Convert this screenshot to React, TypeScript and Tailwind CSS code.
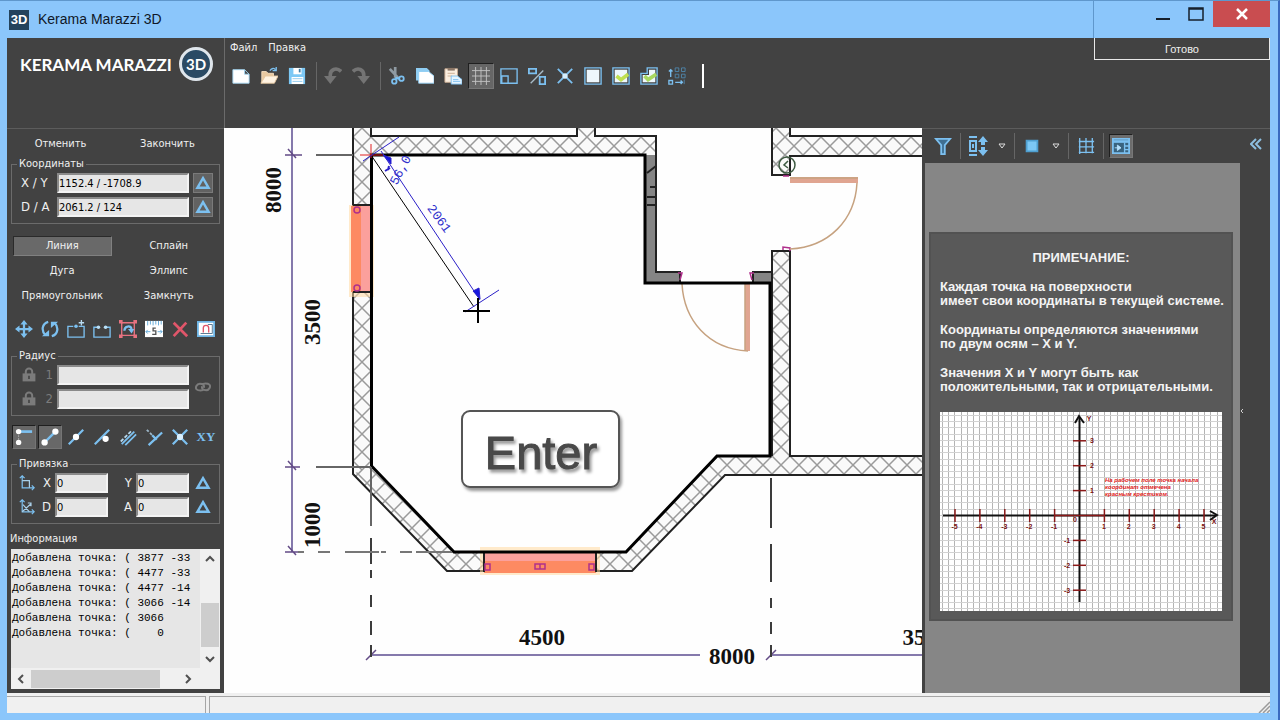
import React, { useState } from 'react';

type IconProps = { children: React.ReactNode; size?: string };

function Icon({ children, size = 'size-[18px]' }: IconProps) {
  return (
    <svg viewBox="0 0 20 20" className={`${size} shrink-0`} fill="none" aria-hidden="true">
      {children}
    </svg>
  );
}

const BLUE = '#7cc0f0';

const mainTools = [
  {
    name: 'Новый',
    icon: <path d="M1 3h13l5 5v10H1z M14 3v5h5" fill="#fff" stroke="#a5d8f5" />,
  },
  {
    name: 'Открыть',
    icon: (
      <>
        <path d="M2 18V5h5l2 2h6v3" fill="#e9c9a0" stroke="#f3dcbf" />
        <path d="M1 18l5-8h14l-4 8z" fill="#fff3e2" stroke="#e9c9a0" />
        <path d="M11 4c2-3 5-3 6-1M18 0v4h-4" stroke={BLUE} strokeWidth="1.5" />
      </>
    ),
  },
  {
    name: 'Сохранить',
    icon: (
      <>
        <path d="M1 1h18v18H1z" fill="#7cc8f5" />
        <path d="M6 1h9v7H6zM4 11h13v8H4z" fill="#fff" />
        <path d="M12 2h2v4h-2z" fill="#3d7ea8" />
        <path d="M5 13h11M5 16h11" stroke="#8bc8ee" />
      </>
    ),
  },
  null,
  {
    name: 'Отменить действие',
    icon: (
      <>
        <path d="M19 5C14 0 6 2 7 11" stroke="#747474" strokeWidth="4" />
        <path d="M0 10h14l-7 9z" fill="#747474" />
      </>
    ),
  },
  {
    name: 'Повторить действие',
    icon: (
      <>
        <path d="M1 5c5-5 13-3 12 6" stroke="#747474" strokeWidth="4" />
        <path d="M6 10h14l-7 9z" fill="#747474" />
      </>
    ),
  },
  null,
  {
    name: 'Вырезать',
    icon: (
      <>
        <path d="M2 2l10 11M8 0v12" stroke="#8f9aa2" strokeWidth="3" />
        <circle cx="7" cy="16" r="2.5" stroke={BLUE} strokeWidth="2" />
        <circle cx="15" cy="13" r="2.5" stroke={BLUE} strokeWidth="2" />
        <path d="M8 12l5 1" stroke={BLUE} strokeWidth="2.5" />
      </>
    ),
  },
  {
    name: 'Копировать',
    icon: (
      <>
        <path d="M0 1h12l3 3v11H0z" fill="#8fcdf3" />
        <path d="M3 5h11l6 5v8H3z" fill="#fff" stroke="#8fcdf3" />
      </>
    ),
  },
  {
    name: 'Вставить',
    icon: (
      <>
        <path d="M1 2h14v15H1z" fill="#fbeee0" stroke="#c9ab92" />
        <path d="M4 1h8v3H4z" fill="#8c7767" />
        <path d="M4 7h8M4 10h5" stroke="#c9ab92" />
        <path d="M8 10h7l5 4v5H8z" fill="#e6f5ff" stroke="#7cc0f0" />
        <path d="M10 14h6M10 16h8" stroke="#7cc0f0" />
      </>
    ),
  },
  {
    name: 'Сетка',
    icon: <path d="M0 4h20M0 10h20M0 16h20M4 0v20M10 0v20M16 0v20" stroke="#c4c4c4" />,
  },
  {
    name: 'Масштаб',
    icon: <path d="M1 2h18v16H1zM2 10h7v8H2z" stroke={BLUE} strokeWidth="1.5" />,
  },
  {
    name: 'Пропорции',
    icon: (
      <>
        <path d="M1 2h8v5H1zM13 11h6v8h-6z" stroke={BLUE} strokeWidth="2" />
        <path d="M17 4L3 18" stroke="#a9bdca" strokeWidth="1.5" />
      </>
    ),
  },
  {
    name: 'Пересечение',
    icon: (
      <>
        <path d="M2 2l16 16M18 2L2 18" stroke={BLUE} strokeWidth="2" />
        <circle cx="10" cy="10" r="3" fill="#d4efff" />
      </>
    ),
  },
  {
    name: 'Поверхность',
    icon: (
      <>
        <path d="M1 1h18v18H1z" stroke={BLUE} strokeWidth="1.5" />
        <path d="M3 3h14v14H3z" fill="#eef7fc" />
      </>
    ),
  },
  {
    name: 'Принять поверхность',
    icon: (
      <>
        <path d="M1 1h18v18H1z" stroke={BLUE} strokeWidth="1.5" />
        <path d="M3 3h14v14H3z" fill="#eef7fc" />
        <path d="M5 10l5 4 8-6" stroke="#bfe052" strokeWidth="4" />
      </>
    ),
  },
  {
    name: 'Принять контур',
    icon: (
      <>
        <path d="M1 7h7V1h11v18H1z" stroke={BLUE} strokeWidth="1.5" />
        <path d="M3 9h7V3h7v14H3z" fill="#eef7fc" />
        <path d="M5 10l4 4 9-6" stroke="#a8d860" strokeWidth="4" />
      </>
    ),
  },
  {
    name: 'Массив',
    icon: (
      <>
        <path d="M1 15h4v4H1zM3 11V3M1 5l2-2 2 2M8 17h8M14 15l2 2-2 2" stroke={BLUE} strokeWidth="1.5" />
        <path d="M8 1h4v4H8zM15 1h4v4h-4zM8 8h4v4H8zM15 8h4v4h-4zM18 14v5" stroke="#4f87ad" />
      </>
    ),
  },
];

const editTools = [
  {
    name: 'Переместить',
    icon: (
      <>
        <path d="M10 3v14M3 10h14" stroke={BLUE} strokeWidth="2.5" />
        <path d="M10 0l4 5H6zM10 20l-4-5h8zM0 10l5-4v8zM20 10l-5 4V6z" fill={BLUE} />
      </>
    ),
  },
  {
    name: 'Повернуть',
    icon: (
      <>
        <path d="M8 2C1 4 0 12 5 17M12 18c7-2 8-10 3-15" stroke={BLUE} strokeWidth="2.5" />
        <path d="M1 18h8v-7zM19 2h-8v7z" fill={BLUE} />
      </>
    ),
  },
  {
    name: 'Добавить точку',
    icon: (
      <>
        <path d="M7 7H1v12h18V7h-6" stroke={BLUE} strokeWidth="1.5" />
        <path d="M16 0v6M13 3h6" stroke="#b9dcf2" strokeWidth="1.5" />
        <circle cx="10" cy="7" r="2" fill={BLUE} />
      </>
    ),
  },
  {
    name: 'Удалить точку',
    icon: (
      <>
        <path d="M6 8H1v11h18V8h-5" stroke={BLUE} strokeWidth="1.5" />
        <circle cx="6" cy="8" r="2" fill="#b9e0f8" />
        <circle cx="14" cy="8" r="2" fill="#b9e0f8" />
      </>
    ),
  },
  {
    name: 'Трансформация',
    icon: (
      <>
        <path d="M3 3h14v14H3z" stroke="#e77280" strokeWidth="1.5" />
        <path d="M0 0h4v4H0zM16 0h4v4h-4zM0 16h4v4H0zM16 16h4v4h-4z" fill="#e77280" />
        <path d="M6 12c0-6 7-6 8-2" stroke={BLUE} strokeWidth="2.5" />
        <path d="M10 10h7l-3 5z" fill={BLUE} />
      </>
    ),
  },
  {
    name: 'Размер',
    icon: (
      <>
        <path d="M0 1h20v18H0z" fill="#fff" />
        <path d="M3 1v5M6 1v4M9 1v5M12 1v4M15 1v5M18 1v4M1 13h5M14 13h5M3 11l-2 2 2 2M17 11l2 2-2 2" stroke="#5aa6d8" />
        <path d="M12 9H9v3h3v4H8" stroke="#555" strokeWidth="1.5" />
      </>
    ),
  },
  {
    name: 'Удалить',
    icon: <path d="M3 3l15 15M17 3L3 18" stroke="#e0566a" strokeWidth="3" />,
  },
  {
    name: 'Контур проёма',
    icon: (
      <>
        <path d="M1 2h18v16H1z" fill="#fff" stroke="#6fb6e6" strokeWidth="2" />
        <path d="M12 5h5v10H4" stroke="#4b6f8a" />
        <path d="M7 14V9c0-4 6-4 6 0v5" stroke="#e0566a" strokeWidth="1.5" />
      </>
    ),
  },
];

const snapTools = [
  {
    name: 'Привязка к углу',
    icon: (
      <>
        <path d="M4 4h15" stroke={BLUE} strokeWidth="3" />
        <path d="M4 8v6" stroke="#aaa" strokeDasharray="2 1" />
        <circle cx="4" cy="4" r="3" fill="#fff" />
        <circle cx="4" cy="16" r="3" fill="#fff" />
      </>
    ),
  },
  {
    name: 'Привязка к концу',
    icon: (
      <>
        <path d="M4 16L16 4" stroke={BLUE} strokeWidth="2.5" />
        <circle cx="16" cy="4" r="3.5" fill="#fff" />
        <circle cx="4" cy="16" r="3.5" fill="#fff" />
      </>
    ),
  },
  {
    name: 'Привязка к середине',
    icon: (
      <>
        <path d="M2 18L18 2" stroke={BLUE} strokeWidth="2.5" />
        <circle cx="10" cy="10" r="3.5" fill="#fff" />
      </>
    ),
  },
  {
    name: 'Ближайшая точка',
    icon: (
      <>
        <path d="M2 18L18 2" stroke={BLUE} strokeWidth="2.5" />
        <circle cx="14" cy="12" r="3.5" fill="#fff" />
      </>
    ),
  },
  {
    name: 'Параллель',
    icon: (
      <>
        <path d="M2 15L14 3" stroke="#b6d7ec" strokeWidth="2" strokeDasharray="4 2" />
        <path d="M3 18L17 4M7 19L19 7" stroke={BLUE} strokeWidth="2" />
      </>
    ),
  },
  {
    name: 'Перпендикуляр',
    icon: (
      <>
        <path d="M2 2l8 8" stroke="#9cb7c9" strokeWidth="2" strokeDasharray="3 2" />
        <path d="M4 19L19 5M8 8l5 5" stroke={BLUE} strokeWidth="2.5" />
      </>
    ),
  },
  {
    name: 'Привязка к пересечению',
    icon: (
      <>
        <path d="M2 2l16 16M18 2L2 18" stroke={BLUE} strokeWidth="2.5" />
        <circle cx="10" cy="10" r="3.5" fill="#d9f0ff" />
      </>
    ),
  },
];

const log = [
  'Добавлена точка: ( 3877 -33',
  'Добавлена точка: ( 4477 -33',
  'Добавлена точка: ( 4477 -14',
  'Добавлена точка: ( 3066 -14',
  'Добавлена точка: ( 3066',
  'Добавлена точка: (    0',
];

const fieldClass =
  'h-5 w-full min-w-0 border-2 border-t-[#8a8a8a] border-l-[#8a8a8a] border-r-[#f4f4f4] border-b-[#f4f4f4] bg-[#e6e6e6] text-[11px] leading-4 text-black outline-none';

function Triangle() {
  return (
    <Icon size="size-4">
      <path d="M10 4l7 12H3z" stroke={BLUE} strokeWidth="3" />
    </Icon>
  );
}

function Lock() {
  return (
    <Icon size="size-4">
      <path d="M6 9V6a4 4 0 0 1 8 0v3" stroke="#7b7b7b" strokeWidth="2.5" />
      <path d="M2 8h16v10H2z" fill="#7b7b7b" />
      <path d="M9 11h2v4H9z" fill="#424242" />
    </Icon>
  );
}

function AxisIcon({ angled }: { angled?: boolean }) {
  return (
    <Icon size="size-4">
      <path d="M4 1v15h15M1 4l3-3 3 3M16 13l3 3-3 3" stroke={BLUE} strokeWidth="1.5" />
      {angled ? (
        <path d="M4 16L15 6M5 7l8 9M11 5h4v4" stroke="#a9cfe8" strokeWidth="1.5" />
      ) : (
        <path d="M4 7h9v9" stroke="#a9cfe8" strokeWidth="1.5" />
      )}
    </Icon>
  );
}

function Group({ title, children }: { title: string; children: React.ReactNode }) {
  return (
    <fieldset className="mx-1 min-w-0 border border-[#6b6b6b] px-[5px] pt-px pb-1.5">
      <legend className="px-0.5 leading-4">{title}</legend>
      {children}
    </fieldset>
  );
}

function LeftPanel() {
  const modes = ['Линия', 'Сплайн', 'Дуга', 'Эллипс', 'Прямоугольник', 'Замкнуть'];
  const [mode, setMode] = useState('Линия');

  return (
    <aside className="flex w-[217px] shrink-0 flex-col border-t border-[#5c5c5c] pt-[5px] pb-1">
      <div className="grid h-5 grid-cols-2 pr-[3px]">
        <button type="button">Отменить</button>
        <button type="button">Закончить</button>
      </div>

      <div className="mt-0.5">
        <Group title="Координаты">
          <div className="grid grid-cols-[32px_1fr_20px] items-center gap-x-1 gap-y-1 pr-px pl-1">
            <label htmlFor="xy" className="text-[13px] whitespace-nowrap">X / Y</label>
            <input id="xy" className={fieldClass} defaultValue="1152.4 / -1708.9" />
            <button type="button" aria-label="Относительно X / Y" className="flex size-5 items-center justify-center border border-[#7a7a7a] bg-[#626262]"><Triangle /></button>
            <label htmlFor="da" className="text-[13px] whitespace-nowrap">D / A</label>
            <input id="da" className={fieldClass} defaultValue="2061.2 / 124" />
            <button type="button" aria-label="Относительно D / A" className="flex size-5 items-center justify-center border border-[#7a7a7a] bg-[#626262]"><Triangle /></button>
          </div>
        </Group>
      </div>

      <div className="mt-3 grid grid-cols-2 gap-x-2 gap-y-[5px] px-1.5">
        {modes.map((m) => (
          <button
            key={m}
            type="button"
            onClick={() => setMode(m)}
            className={
              m === mode
                ? 'h-5 border border-t-[#2a2a2a] border-l-[#2a2a2a] border-r-[#808080] border-b-[#808080] bg-[#696969]'
                : 'h-5'
            }
          >
            {m}
          </button>
        ))}
      </div>

      <div className="mt-[11px] flex pl-1">
        {editTools.map((t) => (
          <button key={t.name} type="button" aria-label={t.name} className="flex h-6 w-[26px] items-center justify-center">
            <Icon>{t.icon}</Icon>
          </button>
        ))}
      </div>

      <div className="mt-[7px]">
        <Group title="Радиус">
          <div className="grid grid-cols-[16px_12px_1fr_20px] items-center gap-x-1 gap-y-1 pr-px pl-1 text-[13px] text-[#7b7b7b]">
            <Lock />
            <label htmlFor="r1" className="text-right">1</label>
            <input id="r1" className={fieldClass} />
            <button type="button" aria-label="Связать радиусы" className="row-span-2 flex items-center justify-center">
              <svg viewBox="0 0 20 12" className="h-3 w-4" fill="none" stroke="#7b7b7b" strokeWidth="2.5">
                <path d="M11 9c-1 2-7 2-9 0s0-7 4-7 6 2 5 5M9 3c1-2 7-2 9 0s0 7-4 7-6-2-5-5" />
              </svg>
            </button>
            <Lock />
            <label htmlFor="r2" className="text-right">2</label>
            <input id="r2" className={fieldClass} />
          </div>
        </Group>
      </div>

      <div className="mt-[9px] flex pl-[5px]">
        {snapTools.map((t, i) => (
          <button
            key={t.name}
            type="button"
            aria-label={t.name}
            className={
              i < 2
                ? 'mr-0.5 flex size-6 items-center justify-center border border-t-[#1f1f1f] border-l-[#1f1f1f] border-r-[#757575] border-b-[#757575] bg-[#686868]'
                : 'mr-0.5 flex size-6 items-center justify-center'
            }
          >
            <Icon>{t.icon}</Icon>
          </button>
        ))}
        <button type="button" className="size-6 font-['Liberation_Serif',serif] text-[13px] font-bold text-[#7cc0f0]">XY</button>
      </div>

      <div className="mt-[7px]">
        <Group title="Привязка">
          <div className="grid grid-cols-[16px_12px_1fr_20px_1fr_20px] items-center gap-x-1 gap-y-1 pr-px pl-0.5 text-[13px]">
            <AxisIcon />
            <label htmlFor="sx" className="text-right">X</label>
            <input id="sx" className={fieldClass} defaultValue="0" />
            <label htmlFor="sy" className="text-right">Y</label>
            <input id="sy" className={fieldClass} defaultValue="0" />
            <button type="button" aria-label="Относительная привязка X, Y" className="flex justify-center"><Triangle /></button>
            <AxisIcon angled />
            <label htmlFor="sd" className="text-right">D</label>
            <input id="sd" className={fieldClass} defaultValue="0" />
            <label htmlFor="sa" className="text-right">A</label>
            <input id="sa" className={fieldClass} defaultValue="0" />
            <button type="button" aria-label="Относительная привязка D, A" className="flex justify-center"><Triangle /></button>
          </div>
        </Group>
      </div>

      <h2 className="mt-[7px] px-[3px] leading-4">Информация</h2>
      <div className="mx-1 mt-0.5 flex min-h-[120px] flex-1 flex-col bg-[#f0f0f0]">
        <div className="flex flex-1">
          <pre className="h-[119px] min-w-0 flex-1 overflow-hidden bg-[#e6e6e6] pt-0.5 pl-px font-['Liberation_Mono',monospace] text-[11px] leading-[15px] text-black">
            {log.join('\n')}
          </pre>
          <div className="flex w-5 flex-col items-center justify-between">
            <ScrollArrow d="M2 7l4-4 4 4" />
            <div className="mt-8 h-11 w-[18px] bg-[#cdcdcd]" />
            <ScrollArrow d="M2 3l4 4 4-4" />
          </div>
        </div>
        <div className="flex h-5 items-center">
          <ScrollArrow d="M8 1L4 5l4 4" />
          <div className="h-[18px] w-[129px] bg-[#cdcdcd]" />
          <div className="flex w-[38px] justify-end"><ScrollArrow d="M4 1l4 4-4 4" /></div>
        </div>
      </div>
    </aside>
  );
}

function ScrollArrow({ d }: { d: string }) {
  return (
    <button type="button" aria-label="Прокрутка" className="flex size-5 shrink-0 items-center justify-center">
      <svg viewBox="0 0 12 10" className="h-2.5 w-3" fill="none" stroke="#505050" strokeWidth="2">
        <path d={d} />
      </svg>
    </button>
  );
}

function FloorPlan() {
  return (
    <svg viewBox="224 128 698 565" preserveAspectRatio="xMidYMid slice" className="block h-full w-full bg-[#fefefe]" fill="none">
      <defs>
        <pattern id="hatch" x="353" y="137" width="18" height="18" patternUnits="userSpaceOnUse">
          <rect width="18" height="18" fill="#fafafa" />
          <path d="M0 0l18 18M18 0L0 18" stroke="#9a9a9a" strokeWidth="1.5" />
        </pattern>
        <pattern id="hatchRight" x="772" y="456" width="18" height="18" patternUnits="userSpaceOnUse">
          <rect width="18" height="18" fill="#fafafa" />
          <path d="M0 0l18 18M18 0L0 18" stroke="#9a9a9a" strokeWidth="1.5" />
        </pattern>
        <filter id="keyShadow" x="-10%" y="-10%" width="130%" height="140%">
          <feDropShadow dx="2" dy="3" stdDeviation="1.5" floodColor="#000" floodOpacity="0.4" />
        </filter>
      </defs>

      {/* walls */}
      <path d="M353 120H371V474H353z" fill="url(#hatch)" />
      <path d="M371 136H577V120H595V136H656V155H371z" fill="url(#hatch)" />
      <path d="M772 120H790V136H930V156H790V175H772z" fill="url(#hatch)" />
      <path d="M772 251H790V456H930V475H725L717 456H772z" fill="url(#hatchRight)" />
      <path d="M353 474L371 466L454 552H484V571H447zM596 552H626L717 456L725 475L632 571H596z" fill="url(#hatchRight)" />
      <path d="M645 155H656V272H680V283H645zM753 272H771V283H753z" fill="#858585" />

      <g stroke="#222" strokeWidth="2">
        <path d="M353 120V474L447 571H632L725 475H930" />
        <path d="M371 120V136H577V120M595 120V136H656V272H680V283M753 283V272H771" />
        <path d="M772 120V175H790V156H930M790 120V136H930" />
        <path d="M772 456V251H790V456H930" />
        <path d="M656 166l-9 7M647 197h9M647 205h9M656 187h-6" />
      </g>

      {/* windows */}
      <path d="M349 205h25v92h-25zM480 547h120v28H480z" fill="#ffd9a0" fillOpacity="0.55" />
      <path d="M351 206h20v86h-20zM484 552h112v21H484z" fill="#fba09c" />
      <path d="M351 206h10v86h-10zM484 561h112v12H484z" fill="#fd8a62" />
      <path d="M353 205h18M353 292h18M484 552v20M596 552v20" stroke="#222" strokeWidth="2" />
      <g stroke="#b0308c" strokeWidth="1.5">
        <circle cx="357" cy="210" r="3" />
        <circle cx="357" cy="288" r="3" />
        <path d="M485 564h5v6h-5zM535 564h5v5h-5zM540 564h5v5h-5zM589 564h5v6h-5zM678 273h4l-2 7M754 273h-4l2 7M783 250v-3l7 1v3M783 176h6" />
      </g>

      {/* doors */}
      <path d="M790 177h68v6h-68zM745 283h5v68h-5z" fill="#e0a591" />
      <path d="M790 178h68M745 284v67M857 183C855 220 829 247 790 249M682 284C684 320 708 349 748 351" stroke="#c6a280" strokeWidth="1.5" />
      <circle cx="787" cy="165" r="8" stroke="#3e5a42" strokeWidth="1.5" />
      <path d="M788 161l-4 4 4 3" stroke="#3e5a42" strokeWidth="1.5" />

      {/* room outline */}
      <path d="M371.500 155V466L454 552H626L717 456H770V283H645V155z" stroke="#000" strokeWidth="3" />

      {/* dimension lines */}
      <g stroke="#8579ac" strokeWidth="2">
        <path d="M292 120V552M371 655H700M771 655H930" />
        <path d="M285 155h17M285 467h15M285 552h13M288 149l8 9M288 461l8 9M288 546l8 9M366 660l10-10M766 660l10-10" stroke="#634b86" strokeWidth="1.5" />
      </g>
      <g stroke="#3c3c3c" strokeWidth="2">
        <path d="M316 155h37M316 467h55M371 467v59" stroke="#666" />
        <path d="M371 538v26M371 570v8M371 595v12M371 621v14M371 645v12" />
        <path d="M771 478v50M771 544v38M771 598v10M771 622v12M771 645v12" />
        <path d="M298 552h6M318 552h12M345 552h34M381 552h5M400 552h12M416 552h36" stroke="#777" />
      </g>

      <g fill="#111" className="font-['Liberation_Serif',serif] text-[23px] font-bold" textAnchor="middle">
        <text transform="translate(281 190) rotate(-90)">8000</text>
        <text transform="translate(320 322) rotate(-90)">3500</text>
        <text transform="translate(320 525) rotate(-90)">1000</text>
        <text x="542" y="645">4500</text>
        <text x="732" y="664">8000</text>
        <text x="914" y="645">35</text>
      </g>

      {/* segment being drawn */}
      <path d="M371 155L474 307" stroke="#000" />
      <path d="M360 155h24M371 144v14" stroke="#e02020" />
      <g stroke="#2b20c8">
        <path d="M381 151L480 300M363 161L399 137M465 312L499 290" />
        <path d="M383 155l8 3v6zM480 299l-7-8 6-3z" fill="#1616e0" />
        <path d="M385 171l5-3M389 166l-1 4" strokeWidth="2" />
      </g>
      <g fill="#3030cc" className="font-['Liberation_Mono',monospace] text-[13px]" textAnchor="middle">
        <text transform="translate(436 221) rotate(54)">2061</text>
        <text transform="translate(404 172) rotate(-62)">56,0</text>
      </g>
      <path d="M463 311h27M478 298v25" stroke="#000" strokeWidth="2" />

      {/* pressed key */}
      <rect x="462" y="411" width="157" height="76" rx="8" fill="#fff" stroke="#555" strokeWidth="2" filter="url(#keyShadow)" />
      <text x="541" y="469" textAnchor="middle" fill="#484848" stroke="#484848" filter="url(#keyShadow)" className="font-['Liberation_Sans',sans-serif] text-[47px]">Enter</text>
    </svg>
  );
}

function AxesChart() {
  const xs = [-5, -4, -3, -2, -1, 1, 2, 3, 4, 5];
  const ys = [-3, -2, -1, 1, 2, 3];
  const cols = Array.from({ length: 45 }, (_, i) => Math.round(i * 6.24 + 2));
  const rows = Array.from({ length: 32 }, (_, i) => Math.round(i * 6.24 + 3));
  return (
    <svg viewBox="0 0 282 199" className="block w-full bg-white" fill="none">
      <g shapeRendering="crispEdges">
        {cols.map((x) => <path key={x} d={`M${x} 0V199`} stroke="#b4b4b4" />)}
        {rows.map((y) => <path key={y} d={`M0 ${y}H282`} stroke="#d2d2d2" />)}
      </g>
      <path d="M3 103.500H276M139.500 5V190" stroke="#111" strokeWidth="2" />
      <path d="M135 11l4-7 5 7M270 99l7 4-7 5" stroke="#111" strokeWidth="2" />
      <path d="M115 103.500H164" stroke="#8a1818" strokeWidth="1.5" />
      <g stroke="#8a1818" strokeWidth="1.5">
        {xs.map((n) => <path key={n} d={`M${139.5 + n * 24.9} 97v13`} />)}
        {ys.map((n) => <path key={n} d={`M133 ${103.5 - n * 24.9}h13`} />)}
      </g>
      <g fill="#7a1010" className="font-['Liberation_Sans',sans-serif] text-[7px] font-bold" textAnchor="middle">
        {xs.map((n) => <text key={n} x={139 + n * 24.9} y="117">{n}</text>)}
        {ys.map((n) => <text key={n} x={n > 0 ? 152 : 127} y={106 - n * 24.9}>{n}</text>)}
        <text x="149" y="9">Y</text>
        <text x="274" y="112">X</text>
        <text x="135" y="110">0</text>
      </g>
      <g fill="#e02020" className="font-['Liberation_Sans',sans-serif] text-[6px] font-bold italic">
        <text x="165" y="70">На рабочем поле точка начала</text>
        <text x="165" y="77">координат отмечена</text>
        <text x="165" y="84">красным крестиком.</text>
      </g>
    </svg>
  );
}

function RightPanel() {
  const sep = 'h-[26px] w-px bg-[#666]';
  const tool = 'flex h-6 items-center justify-center';
  return (
    <aside className="flex w-[348px] shrink-0 border-t border-[#5c5c5c] pl-[3px]">
      <div className="flex w-[315px] flex-col">
        <div className="flex h-[34px] items-center">
          <button type="button" aria-label="Фильтр" className={`${tool} w-[35px]`}>
            <Icon>
              <path d="M2 2h16l-6 7v10H8V9z" fill="#3f6f92" stroke={BLUE} strokeWidth="2" />
            </Icon>
          </button>
          <span className={sep} />
          <button type="button" aria-label="Сортировка" className={`${tool} w-[33px]`}>
            <Icon size="size-5">
              <path d="M1 1h8M1 19h8M2 5h6v10H2z" stroke={BLUE} strokeWidth="2" />
              <path d="M4 8h2v4H4z" fill={BLUE} />
              <path d="M15 0l5 6h-3v3h-4V6h-3zM15 20l-5-6h3v-3h4v3h3z" fill={BLUE} />
            </Icon>
          </button>
          <button type="button" aria-label="Варианты сортировки" className={`${tool} w-5 pr-1`}>
            <svg viewBox="0 0 8 6" className="h-1.5 w-2" fill="none" stroke="#ddd"><path d="M1 1h6L4 5z" /></svg>
          </button>
          <span className={sep} />
          <button type="button" aria-label="Вид" className={`${tool} w-[33px]`}>
            <Icon>
              <path d="M4 4h12v12H4z" fill="#7cc8f5" stroke="#4f9fd0" strokeWidth="2" />
            </Icon>
          </button>
          <button type="button" aria-label="Варианты вида" className={`${tool} w-5 pr-1`}>
            <svg viewBox="0 0 8 6" className="h-1.5 w-2" fill="none" stroke="#ddd"><path d="M1 1h6L4 5z" /></svg>
          </button>
          <span className={sep} />
          <button type="button" aria-label="Сетка каталога" className={`${tool} w-[34px]`}>
            <Icon>
              <path d="M3 1v18M10 1v17M17 1v17M2 5h17M2 11h17M2 17h17" stroke={BLUE} strokeWidth="1.5" />
            </Icon>
          </button>
          <span className={sep} />
          <button type="button" aria-label="Панель" className="ml-[5px] flex size-6 items-center justify-center border border-t-[#1f1f1f] border-l-[#1f1f1f] border-r-[#777] border-b-[#777] bg-[#6c6c6c]">
            <Icon>
              <path d="M1 2h18v16H1z" fill="#39637f" stroke={BLUE} strokeWidth="2" />
              <path d="M1 5h18" stroke={BLUE} strokeWidth="3" />
              <path d="M14 6v12M14 10h5M14 14h5" stroke={BLUE} strokeWidth="1.5" />
              <path d="M3 12h5M6 9l4 3-4 3z" fill="#b5e2ff" stroke="#b5e2ff" />
            </Icon>
          </button>
        </div>
        <div className="flex-1 bg-[#868686] pr-[7px] pl-1">
          <article className="mt-[69px] border-2 border-[#525252] bg-[#595959] px-[9px] pt-[17px] pb-2 font-['Liberation_Sans',sans-serif] text-[13px] leading-[14px] font-bold text-[#f4f4f4]">
            <h2 className="text-center">ПРИМЕЧАНИЕ:</h2>
            <p className="mt-[15px] whitespace-nowrap">Каждая точка на поверхности<br />имеет свои координаты в текущей системе.</p>
            <p className="mt-[15px] whitespace-nowrap">Координаты определяются значениями<br />по двум осям – X и Y.</p>
            <p className="mt-[15px] mb-[18px] whitespace-nowrap">Значения X и Y могут быть как<br />положительными, так и отрицательными.</p>
            <AxesChart />
          </article>
        </div>
      </div>
      <div className="flex flex-1 flex-col items-center">
        <button type="button" aria-label="Развернуть панель" className="mt-[3px] flex size-6 items-center justify-center pl-0.5">
          <svg viewBox="0 0 12 12" className="size-3" fill="none" stroke="#8dbfe0" strokeWidth="2">
            <path d="M6 1L1 6l5 5M11 1L6 6l5 5" />
          </svg>
        </button>
        <button type="button" aria-label="Свернуть панель" className="mt-[252px] self-start">
          <svg viewBox="0 0 3 6" className="h-1.5 w-[3px]" fill="none" stroke="#d0d0d0"><path d="M3 1L1 3l2 2" /></svg>
        </button>
      </div>
    </aside>
  );
}

export default function App() {
  return (
    <div className="flex min-h-screen w-full flex-col border-t border-r-2 border-t-[#5f97cc] border-r-[#3a6bc0] bg-[#8bc6fb] pr-2 pb-[7px] pl-[7px] font-['DejaVu_Sans_Condensed','Noto_Sans',sans-serif] text-[11px] text-[#f0f0f0]">
      <header className="flex h-[37px] shrink-0 text-[#101828]">
        <div className="flex flex-1 items-center pl-0.5">
          <span className="flex size-5 items-center justify-center bg-[#24435c] font-['Liberation_Sans',sans-serif] text-[13px] font-bold text-white">3D</span>
          <h1 className="ml-[9px] font-['Liberation_Sans',sans-serif] text-[14px]">Kerama Marazzi 3D</h1>
        </div>
        <div className="flex w-[177px] items-start justify-end border-l border-[#5f97cc]">
          <button type="button" aria-label="Свернуть" className="flex h-[25px] w-8 items-center justify-center">
            <svg viewBox="0 0 16 14" className="h-3.5 w-4"><path d="M1 11h14v2H1z" fill="#16202c" /></svg>
          </button>
          <button type="button" aria-label="Развернуть" className="flex h-[25px] w-[34px] items-center justify-center">
            <svg viewBox="0 0 16 14" className="h-3.5 w-4"><path d="M1 1h14v12H1zM1 2h14" fill="none" stroke="#16202c" strokeWidth="1.5" /></svg>
          </button>
          <button type="button" aria-label="Закрыть" className="flex h-[26px] w-[57px] items-center justify-center bg-[#c94d50]">
            <svg viewBox="0 0 12 12" className="size-3" stroke="#fff" strokeWidth="2.5"><path d="M1 1l10 10M11 1L1 11" /></svg>
          </button>
        </div>
      </header>

      <div className="flex flex-1 flex-col bg-[#424242]">
        <div className="flex h-[90px] shrink-0">
          <div className="flex w-[218px] shrink-0 items-start border-r border-[#6b6b6b] pt-[9px] pl-[13px]">
            <span className="w-[159px] pt-1 font-['Lato',sans-serif] text-[17px] leading-7 font-bold whitespace-nowrap text-white">KERAMA MARAZZI</span>
            <span className="flex size-[34px] shrink-0 items-center justify-center rounded-full border-[3px] border-[#dfe6ec] bg-[#2a4a64] font-['Lato',sans-serif] text-[15px] font-bold text-white">3D</span>
          </div>
          <div className="flex-1 pl-0.5">
            <nav className="flex h-5 items-center gap-[11px] pl-[3px]">
              <button type="button">Файл</button>
              <button type="button">Правка</button>
            </nav>
            <div className="mt-1 flex items-center">
              {mainTools.map((t, i) =>
                t ? (
                  <button
                    key={t.name}
                    type="button"
                    aria-label={t.name}
                    className={
                      t.name === 'Сетка'
                        ? 'mx-px flex size-[26px] items-center justify-center border border-t-[#1f1f1f] border-l-[#1f1f1f] border-r-[#777] border-b-[#777] bg-[#666]'
                        : 'flex h-7 w-7 items-center justify-center'
                    }
                  >
                    <Icon>{t.icon}</Icon>
                  </button>
                ) : (
                  <span key={i} className="mr-0.5 ml-[5px] h-7 w-px bg-[#666]" />
                )
              )}
              <span className="ml-[11px] h-6 w-0.5 bg-white" />
            </div>
          </div>
          <div className="w-[176px]">
            <div className="h-[22px] border border-t-0 border-[#e8e8e8] text-center font-['Liberation_Sans',sans-serif] text-[11px] leading-[22px]">Готово</div>
          </div>
        </div>

        <div className="flex flex-1">
          <LeftPanel />
          <main className="min-w-0 flex-1">
            <FloorPlan />
          </main>
          <RightPanel />
        </div>
      </div>

      <footer className="flex h-5 shrink-0 gap-[3px] bg-[#f0f0f0] pt-[3px] text-[#9a9a9a]">
        <div className="w-[199px] border-t border-r border-[#a6a6a6]" />
        <div className="flex flex-1 items-end justify-end border-t border-l border-[#a6a6a6]">
          <svg viewBox="0 0 12 12" className="size-3" stroke="currentColor" strokeWidth="1.5">
            <path d="M1 12L12 1M5 12l7-7M9 12l3-3" />
          </svg>
        </div>
      </footer>
    </div>
  );
}
